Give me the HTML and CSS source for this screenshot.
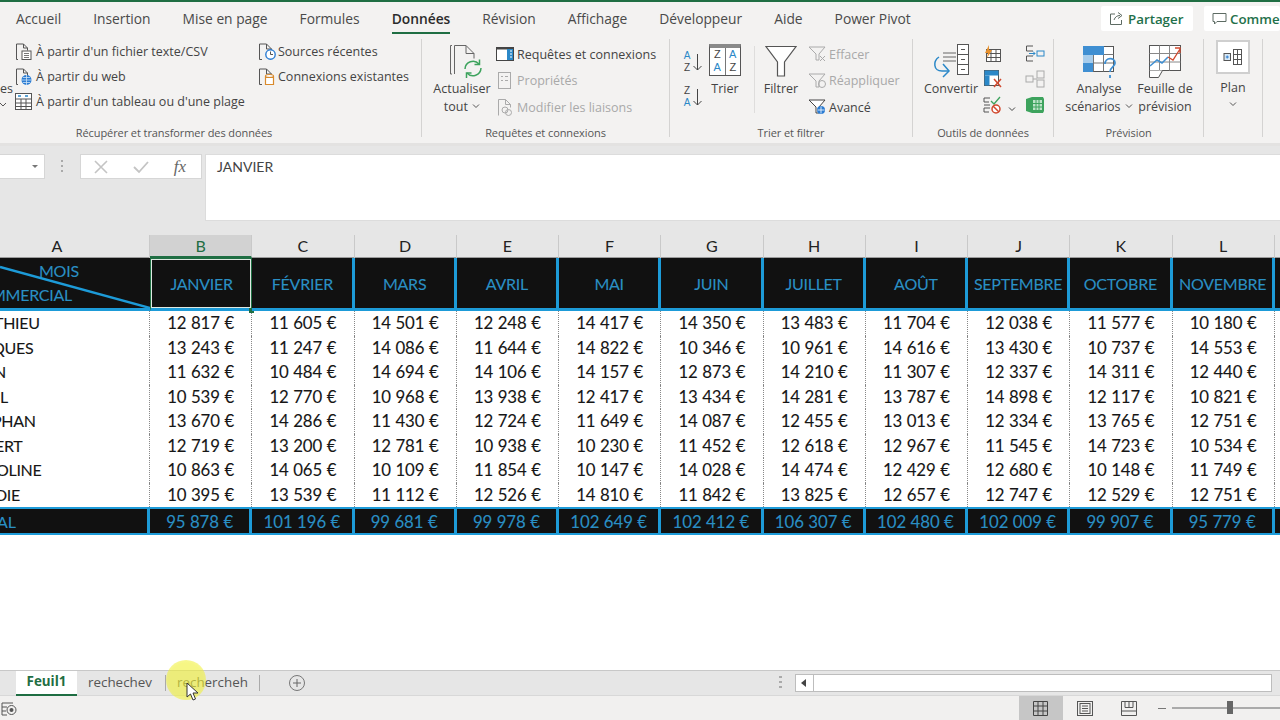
FILE: index.html
```html
<!DOCTYPE html>
<html lang="fr">
<head>
<meta charset="utf-8">
<title>Excel</title>
<link rel="stylesheet" href="styles.css">
</head>
<body>
<div class="app">
  <div class="topline"></div>
  <div class="tabs">
    <span class="tab">Accueil</span><span class="tab">Insertion</span><span class="tab">Mise en page</span><span class="tab">Formules</span><span class="tab active">Données</span><span class="tab">Révision</span><span class="tab">Affichage</span><span class="tab">Développeur</span><span class="tab">Aide</span><span class="tab">Power Pivot</span>
    <span class="spacer"></span>
    <span class="share"><svg width="16" height="15" viewBox="0 0 16 15"><path d="M6 3H1.500v10.500h11V9M5 9c1-3 3-4.500 6-4.500M9 1.500l4 3-4 3" fill="none" stroke="#5d6b63"/></svg>Partager</span>
    <span class="share comment"><svg width="15" height="14" viewBox="0 0 15 14"><path d="M1 1.500h13v8H5L2.500 12V9.500H1z" fill="none" stroke="#5d6b63"/></svg>Commentaires</span>
  </div>

  <div class="ribbon">
    <section class="g g1">
      <div class="body">
        <div class="stub"><span>es</span><svg width="8" height="5" viewBox="0 0 8 5"><path d="M0 0l3 3 3-3" fill="none" stroke="#555"/></svg></div>
        <div class="col c1">
          <div class="row"><svg class="i1" width="18" height="17" viewBox="0 0 18 17"><path d="M3 16.500H1.500V1h7l4 4v2.500" fill="none" stroke="#555"/><path d="M8.500 1v4h4" fill="none" stroke="#555"/><rect x="7" y="8" width="9" height="8.500" fill="#fff" stroke="#555"/><path d="M9 10.500h5M9 12.500h5M9 14.500h5" stroke="#777"/></svg>À partir d'un fichier texte/CSV</div>
          <div class="row"><svg class="i1" width="18" height="17" viewBox="0 0 18 17"><path d="M3 16.500H1.500V1h7l4 4v2.500" fill="none" stroke="#555"/><path d="M8.500 1v4h4" fill="none" stroke="#555"/><circle cx="11.500" cy="12" r="5" fill="#2b7cd3"/><path d="M6.500 12h10M11.500 7v10M8 9.500h7M8 14.500h7" stroke="#cfe3f6" stroke-width=".8"/></svg>À partir du web</div>
          <div class="row"><svg class="i1" width="18" height="17" viewBox="0 0 18 17"><rect x=".5" y=".5" width="16" height="16" fill="#fff" stroke="#555"/><path d="M.5 6h16M.5 10h16M.5 13.500h16M6 6v11M11 6v11" stroke="#555"/><path d="M3 3h3M10 3h3" stroke="#2b88c8" stroke-width="1.500"/></svg>À partir d'un tableau ou d'une plage</div>
        </div>
        <div class="col">
          <div class="row"><svg class="i2" width="18" height="17" viewBox="0 0 18 17"><path d="M3 16.500H.5V1h7l5 5v1" fill="none" stroke="#555"/><path d="M7.500 1v5h5" fill="none" stroke="#555"/><circle cx="11.500" cy="11.500" r="4.700" fill="#fff" stroke="#2b7cd3" stroke-width="1.400"/><path d="M11.500 8.500v3h2.500" fill="none" stroke="#555"/></svg>Sources récentes</div>
          <div class="row"><svg class="i2" width="18" height="17" viewBox="0 0 18 17"><path d="M3 16.500H.5V1h7l5 5v1" fill="none" stroke="#555"/><path d="M7.500 1v5h5" fill="none" stroke="#555"/><path d="M6.500 8c0-2 8-2 8 0v8.500h-8zM6.500 8c0 2 8 2 8 0" fill="#fff" stroke="#d98a2b" stroke-width="1.200"/></svg>Connexions existantes</div>
        </div>
      </div>
      <div class="label l1">Récupérer et transformer des données</div>
    </section>

    <section class="g g2">
      <div class="body">
        <div class="big b-act">
          <svg width="44" height="36" viewBox="0 0 44 36"><path d="M12 1.500h-1.500V30H12M14.500 30V1.500H26l8 8v5" fill="none" stroke="#666"/><path d="M26 1.500v8h8" fill="none" stroke="#666"/><path d="M25 25a8 8 0 0 1 14-5M41 24a8 8 0 0 1-14 5" fill="none" stroke="#3da35d" stroke-width="1.500"/><path d="M39.500 15.500v5h-5M26.500 34v-5h5" fill="none" stroke="#3da35d" stroke-width="1.500"/></svg>
          <span>Actualiser</span><span>tout <svg class="chev" width="8" height="5" viewBox="0 0 8 5"><path d="M1 .5l3 3 3-3" fill="none" stroke="#555"/></svg></span>
        </div>
        <div class="col c2">
          <div class="row r2"><svg class="i3" width="19" height="16" viewBox="0 0 19 16"><rect x=".5" y="1.500" width="17" height="13" fill="#fff" stroke="#444"/><path d="M.5 2.500h17" stroke="#444" stroke-width="2"/><rect x="11" y="3" width="6" height="11" fill="#2b88c8"/><path d="M14 5h2M14 8h2M14 11h2" stroke="#fff"/></svg>Requêtes et connexions</div>
          <div class="row r2 off"><svg class="i3" width="19" height="17" viewBox="0 0 19 17"><rect x="2.500" y=".5" width="12" height="16" fill="none" stroke="#aaa"/><path d="M5 4.500h2M9 4.500h3M5 8.500h2M9 8.500h3" stroke="#aaa"/></svg>Propriétés</div>
          <div class="row r2 off"><svg class="i3" width="19" height="17" viewBox="0 0 19 17"><path d="M2.500 16.500V.5h7l5 5v3" fill="none" stroke="#aaa"/><path d="M9.500.5v5h5" fill="none" stroke="#aaa"/><circle cx="9" cy="11" r="3" fill="none" stroke="#aaa"/><circle cx="12.500" cy="13.500" r="3" fill="none" stroke="#aaa"/></svg>Modifier les liaisons</div>
        </div>
      </div>
      <div class="label l2">Requêtes et connexions</div>
    </section>

    <section class="g g3">
      <div class="body">
        <div class="sortcol">
          <div class="sort"><span class="az"><b>A</b><i>Z</i></span><svg width="9" height="18" viewBox="0 0 9 18"><path d="M4.500 1v16M.5 13l4 4 4-4" fill="none" stroke="#444"/></svg></div>
          <div class="sort"><span class="az"><i>Z</i><b>A</b></span><svg width="9" height="18" viewBox="0 0 9 18"><path d="M4.500 1v16M.5 13l4 4 4-4" fill="none" stroke="#444"/></svg></div>
        </div>
        <div class="big b-tri">
          <div class="trier-ico"><span class="tr-cell"><i>Z</i><b>A</b></span><span class="tr-cell"><b>A</b><i>Z</i></span></div>
          <span>Trier</span>
        </div>
        <div class="vsep"></div>
        <div class="big b-fil">
          <svg width="36" height="36" viewBox="0 0 36 36"><path d="M3 2.500h30L21.500 18v14h-7V18z" fill="#fff" stroke="#555" stroke-width="1.200"/></svg>
          <span>Filtrer</span>
        </div>
        <div class="col c3">
          <div class="row r2 off"><svg class="i4" width="19" height="16" viewBox="0 0 19 16"><path d="M1 1h16l-6 7v6h-3V8z" fill="none" stroke="#aaa"/><path d="M12 10l5 5M17 10l-5 5" stroke="#aaa"/></svg>Effacer</div>
          <div class="row r2 off"><svg class="i4" width="19" height="16" viewBox="0 0 19 16"><path d="M1 1h16l-6 7v6h-3V8z" fill="none" stroke="#aaa"/><circle cx="14" cy="11" r="3.500" fill="none" stroke="#aaa"/></svg>Réappliquer</div>
          <div class="row r2"><svg class="i4" width="19" height="16" viewBox="0 0 19 16"><path d="M1 1h16l-6 7v6H8V8z" fill="#fff" stroke="#444"/><circle cx="13" cy="11" r="4" fill="#2b7cd3"/><path d="M9.500 11h7M13 7.500v7" stroke="#fff" stroke-width=".8"/></svg>Avancé</div>
        </div>
      </div>
      <div class="label l3">Trier et filtrer</div>
    </section>

    <section class="g g4">
      <div class="body">
        <div class="big b-con">
          <svg width="38" height="36" viewBox="0 0 38 36"><path d="M11 9h13M11 13h13M11 17h13" stroke="#666"/><rect x="25.500" y=".5" width="11" height="30" fill="#fff" stroke="#555"/><path d="M25.500 10.500h11M25.500 20.500h11M29 5.500h4M29 15.500h4M29 25.500h4" stroke="#555"/><path d="M7 13C1 17 1 27 10 27h6" fill="none" stroke="#2b88c8" stroke-width="1.500"/><path d="M11 20l6 7-6 6" fill="none" stroke="#2b88c8" stroke-width="1.500"/></svg>
          <span>Convertir</span>
        </div>
        <div class="col c4">
          <div class="tool"><svg width="20" height="18" viewBox="0 0 20 18"><rect x="3.500" y="4.500" width="14" height="12" fill="#fff" stroke="#555"/><path d="M3.500 8.500h14M3.500 12.500h14M8 4.500v12M13 4.500v12" stroke="#555"/><path d="M6 0L2 8h3l-1 5 5-8H6z" fill="#e8912d"/></svg></div>
          <div class="tool"><svg width="20" height="18" viewBox="0 0 20 18"><rect x="1.500" y=".5" width="14" height="15" fill="#fff" stroke="#555"/><rect x="1.500" y=".5" width="14" height="5" fill="#2b88c8"/><rect x="1.500" y="5.500" width="5" height="10" fill="#2b88c8"/><path d="M11 9l7 8M18 9l-7 8" stroke="#d1492e" stroke-width="1.500"/></svg></div>
          <div class="tool"><svg width="20" height="18" viewBox="0 0 20 18"><path d="M7 2H1v4h5M7 12H1v4h5M1 9h6" fill="none" stroke="#555"/><path d="M8 5l3 3 6-7" fill="none" stroke="#3da35d" stroke-width="1.300"/><circle cx="13" cy="13" r="4" fill="#fff" stroke="#d1492e" stroke-width="1.500"/><path d="M10 10l6 6" stroke="#d1492e" stroke-width="1.500"/></svg></div>
        </div>
        <div class="c4chev"><svg width="8" height="5" viewBox="0 0 8 5"><path d="M1 .5l3 3 3-3" fill="none" stroke="#444"/></svg></div>
        <div class="col c4b">
          <div class="tool"><svg width="20" height="18" viewBox="0 0 20 18"><path d="M8 1H1.500v5H8M8 11H1.500v5H8" fill="none" stroke="#555"/><path d="M4 8.500h6M8 6.500l2 2-2 2" fill="none" stroke="#2b88c8"/><rect x="12" y="6" width="7" height="5" fill="none" stroke="#2b88c8"/></svg></div>
          <div class="tool"><svg width="20" height="18" viewBox="0 0 20 18"><rect x="1" y="6" width="7" height="6" fill="none" stroke="#aaa"/><rect x="12" y="1" width="7" height="7" fill="none" stroke="#aaa"/><rect x="12" y="10" width="7" height="7" fill="none" stroke="#aaa"/><path d="M8 9h4" stroke="#aaa"/></svg></div>
          <div class="tool"><svg width="20" height="18" viewBox="0 0 20 18"><path d="M1 3l6-2h11l1 2v12l-1 2H7l-6-2z" fill="#3da35d"/><rect x="8" y="4" width="9" height="10" fill="#bde3c8"/><path d="M11 4v10M14 4v10M8 7.500h9M8 11h9" stroke="#3da35d"/></svg></div>
        </div>
      </div>
      <div class="label l4">Outils de données</div>
    </section>

    <section class="g g5">
      <div class="body">
        <div class="big b-ana">
          <svg width="36" height="36" viewBox="0 0 36 36"><rect x="2.500" y="2.500" width="30" height="25" fill="#fff" stroke="#555"/><path d="M12.500 2.500v25M22.500 2.500v25M2.500 10.500h30M2.500 19h30" stroke="#777"/><rect x="2" y="2" width="21" height="9" fill="#3f8fd2"/><rect x="2" y="11" width="10" height="8" fill="#a7cdec"/><rect x="2" y="19" width="10" height="9" fill="#3f8fd2"/><path d="M24 20c0-7 10-7 10-1 0 4-5 4-5 9M29 31v3" fill="none" stroke="#3f8fd2" stroke-width="1.800"/></svg>
          <span>Analyse</span><span>scénarios <svg class="chev" width="8" height="5" viewBox="0 0 8 5"><path d="M1 .5l3 3 3-3" fill="none" stroke="#555"/></svg></span>
        </div>
        <div class="big b-feu">
          <svg width="36" height="36" viewBox="0 0 36 36"><rect x="2.500" y="1.500" width="31" height="25" fill="#fff" stroke="#555"/><path d="M12.500 1.500v25M22.500 1.500v25M2.500 9.500h31M2.500 18h31" stroke="#888"/><path d="M2.500 26.500v7h9l4-7" fill="#fff" stroke="#555"/><path d="M3 22l7-6 5 3 6-6" fill="none" stroke="#3f8fd2" stroke-width="1.500"/><path d="M21 13l5 3 7-11M28 4h5v5" fill="none" stroke="#d1492e" stroke-width="1.300"/></svg>
          <span>Feuille de</span><span>prévision</span>
        </div>
      </div>
      <div class="label l5">Prévision</div>
    </section>

    <section class="g g6">
      <div class="planbtn"><svg width="20" height="18" viewBox="0 0 20 18"><rect x="1" y="5.500" width="6.500" height="7" fill="#d8e9f6" stroke="#555"/><path d="M4.200 7.500v3M2.800 9h3" stroke="#2b7cd3"/><rect x="10.500" y="1.500" width="8" height="15" fill="#fff" stroke="#555"/><path d="M10.500 6.500h8M10.500 11.500h8M14.500 1.500v15" stroke="#555"/></svg></div>
      <span class="plan">Plan</span>
      <svg class="chev2" width="8" height="5" viewBox="0 0 8 5"><path d="M1 .5l3 3 3-3" fill="none" stroke="#555"/></svg>
    </section>
  </div>

  <div class="formula">
    <div class="namebox"><span class="caret"></span></div>
    <div class="fdots"></div>
    <div class="fxbox">
      <svg width="16" height="14" viewBox="0 0 16 14"><path d="M2 1l12 12M14 1L2 13" stroke="#c4c4c4" stroke-width="1.600"/></svg>
      <svg width="18" height="14" viewBox="0 0 18 14"><path d="M2 7l5 5L16 2" fill="none" stroke="#c4c4c4" stroke-width="1.800"/></svg>
      <span class="fx">fx</span>
    </div>
    <div class="finput">JANVIER</div>
  </div>

  <div class="heads">
    <span class="h h-a">A</span><span class="h sel">B</span><span class="h">C</span><span class="h">D</span><span class="h">E</span><span class="h">F</span><span class="h">G</span><span class="h">H</span><span class="h">I</span><span class="h">J</span><span class="h">K</span><span class="h">L</span><span class="h last"></span>
  </div>

  <div class="sheet">
    <div class="hc first">
      <span class="mois">MOIS</span><span class="comm">MMERCIAL</span>
      <svg class="diag" width="150" height="50" viewBox="0 0 150 50"><path d="M0 9L150 50" stroke="#1d9bd8" stroke-width="2.400"/></svg>
    </div>
    <div class="hc active-cell">JANVIER<i class="handle"></i></div><div class="hc">FÉVRIER</div><div class="hc">MARS</div><div class="hc">AVRIL</div><div class="hc">MAI</div><div class="hc">JUIN</div><div class="hc">JUILLET</div><div class="hc">AOÛT</div><div class="hc">SEPTEMBRE</div><div class="hc">OCTOBRE</div><div class="hc">NOVEMBRE</div><div class="hc endc"></div>

    <div class="n"><span class="nm n1">THIEU</span></div><div class="c">12 817 €</div><div class="c">11 605 €</div><div class="c">14 501 €</div><div class="c">12 248 €</div><div class="c">14 417 €</div><div class="c">14 350 €</div><div class="c">13 483 €</div><div class="c">11 704 €</div><div class="c">12 038 €</div><div class="c">11 577 €</div><div class="c">10 180 €</div><div class="e"></div>
    <div class="n"><span class="nm n2">QUES</span></div><div class="c">13 243 €</div><div class="c">11 247 €</div><div class="c">14 086 €</div><div class="c">11 644 €</div><div class="c">14 822 €</div><div class="c">10 346 €</div><div class="c">10 961 €</div><div class="c">14 616 €</div><div class="c">13 430 €</div><div class="c">10 737 €</div><div class="c">14 553 €</div><div class="e"></div>
    <div class="n"><span class="nm n3">N</span></div><div class="c">11 632 €</div><div class="c">10 484 €</div><div class="c">14 694 €</div><div class="c">14 106 €</div><div class="c">14 157 €</div><div class="c">12 873 €</div><div class="c">14 210 €</div><div class="c">11 307 €</div><div class="c">12 337 €</div><div class="c">14 311 €</div><div class="c">12 440 €</div><div class="e"></div>
    <div class="n"><span class="nm n4">L</span></div><div class="c">10 539 €</div><div class="c">12 770 €</div><div class="c">10 968 €</div><div class="c">13 938 €</div><div class="c">12 417 €</div><div class="c">13 434 €</div><div class="c">14 281 €</div><div class="c">13 787 €</div><div class="c">14 898 €</div><div class="c">12 117 €</div><div class="c">10 821 €</div><div class="e"></div>
    <div class="n"><span class="nm n5">PHAN</span></div><div class="c">13 670 €</div><div class="c">14 286 €</div><div class="c">11 430 €</div><div class="c">12 724 €</div><div class="c">11 649 €</div><div class="c">14 087 €</div><div class="c">12 455 €</div><div class="c">13 013 €</div><div class="c">12 334 €</div><div class="c">13 765 €</div><div class="c">12 751 €</div><div class="e"></div>
    <div class="n"><span class="nm n6">ERT</span></div><div class="c">12 719 €</div><div class="c">13 200 €</div><div class="c">12 781 €</div><div class="c">10 938 €</div><div class="c">10 230 €</div><div class="c">11 452 €</div><div class="c">12 618 €</div><div class="c">12 967 €</div><div class="c">11 545 €</div><div class="c">14 723 €</div><div class="c">10 534 €</div><div class="e"></div>
    <div class="n"><span class="nm n7">OLINE</span></div><div class="c">10 863 €</div><div class="c">14 065 €</div><div class="c">10 109 €</div><div class="c">11 854 €</div><div class="c">10 147 €</div><div class="c">14 028 €</div><div class="c">14 474 €</div><div class="c">12 429 €</div><div class="c">12 680 €</div><div class="c">10 148 €</div><div class="c">11 749 €</div><div class="e"></div>
    <div class="n"><span class="nm n8">DIE</span></div><div class="c">10 395 €</div><div class="c">13 539 €</div><div class="c">11 112 €</div><div class="c">12 526 €</div><div class="c">14 810 €</div><div class="c">11 842 €</div><div class="c">13 825 €</div><div class="c">12 657 €</div><div class="c">12 747 €</div><div class="c">12 529 €</div><div class="c">12 751 €</div><div class="e"></div>

    <div class="t tn"><span class="nm n9">AL</span></div><div class="t">95 878 €</div><div class="t">101 196 €</div><div class="t">99 681 €</div><div class="t">99 978 €</div><div class="t">102 649 €</div><div class="t">102 412 €</div><div class="t">106 307 €</div><div class="t">102 480 €</div><div class="t">102 009 €</div><div class="t">99 907 €</div><div class="t">95 779 €</div><div class="t endc"></div>
  </div>

  <div class="blank"></div>

  <div class="sheetbar">
    <span class="st cur">Feuil1</span><span class="st">rechechev</span><span class="st">rechercheh</span>
    <svg class="plus" width="18" height="18" viewBox="0 0 18 18"><circle cx="9" cy="9" r="7.500" fill="none" stroke="#777"/><path d="M9 5v8M5 9h8" stroke="#666"/></svg>
    <span class="spacer"></span>
    <span class="sdots"></span>
    <div class="hscroll"><span class="larrow"></span></div>
  </div>

  <div class="status">
    <svg class="macro" width="17" height="15" viewBox="0 0 17 15"><path d="M1 2h11M1 6h5M1 10h4M1 14h5M1 2v12" fill="none" stroke="#555"/><circle cx="10.500" cy="9" r="4.500" fill="#f1f0ef" stroke="#555"/><circle cx="10.500" cy="9" r="2" fill="#555"/></svg>
    <span class="spacer"></span>
    <div class="vw on"><svg width="16" height="15" viewBox="0 0 16 15"><path d="M.5.500h14v14H.5zM.5 5h14M.5 10h14M5 .5v14M10 .5v14" fill="none" stroke="#444"/></svg></div>
    <div class="vw"><svg width="16" height="15" viewBox="0 0 16 15"><rect x=".5" y=".5" width="15" height="14" fill="none" stroke="#555"/><rect x="3" y="2.500" width="10" height="10" fill="none" stroke="#555"/><path d="M5 5h6M5 7.500h6M5 10h6" stroke="#555"/></svg></div>
    <div class="vw"><svg width="16" height="15" viewBox="0 0 16 15"><path d="M.5.500h15v14H.5zM.5 10h15M4 .5v6h4v-6M8 6.500h4v-6" fill="none" stroke="#555"/></svg></div>
    <span class="minus"></span>
    <div class="track"><i class="thumb"></i></div>
  </div>

  <div class="pointer">
    <svg class="arrow" width="14" height="20" viewBox="0 0 14 20"><path d="M1 1v14l3.500-3 2.500 6 2.500-1-2.500-6H12z" fill="#fff" stroke="#333"/></svg>
  </div>
</div>
</body>
</html>
```
FILE: styles.css
```css
* { box-sizing: border-box; }
html, body { margin: 0; padding: 0; }
body { width: 1280px; height: 720px; overflow: hidden; background: #fff; font-family: "Open Sans", "Noto Sans", sans-serif; color: #444; }
.app { position: relative; width: 1280px; height: 720px; overflow: hidden; display: flex; flex-direction: column; }
.spacer { flex: 1; }

.topline { height: 2px; background: #1f6e43; flex: none; }
.tabs { height: 32px; flex: none; background: #f3f2f1; display: flex; align-items: center; padding-left: 16px; gap: 32px; font-size: 13.800px; color: #4a4a4a; white-space: nowrap; overflow: hidden; }
.tab { position: relative; line-height: 34px; height: 32px; }
.tab.active { color: #2b2b2b; font-weight: 600; }
.tab.active::after { content: ""; position: absolute; left: 0; right: 0; bottom: -1px; height: 3px; background: #1f6e43; }
.share { flex: none; width: 92px; overflow: hidden; background: #fff; height: 25px; margin-top: 1px; margin-left: -21px; padding: 0 0 0 8px; display: flex; align-items: center; gap: 3px; font-weight: 600; font-size: 13.300px; color: #23704a; border-radius: 2px; }
.share.comment { width: 76px; }
.share.comment svg { flex: none; }

.ribbon { height: 112px; flex: none; background: #f3f2f1; display: flex; padding-top: 5px; border-bottom: 3px solid #e3e2e1; font-size: 12.500px; }
.g { height: 98px; border-right: 1px solid #d4d3d2; flex: none; display: flex; flex-direction: column; }
.g1 { width: 422px; } .g2 { width: 248px; } .g3 { width: 243px; } .g4 { width: 141px; } .g5 { width: 150px; } .g6 { width: 59px; align-items: center; }
.body { height: 90px; display: flex; flex: none; }
.label { height: 8px; line-height: 8px; font-size: 11px; letter-spacing: -0.08px; color: #555; white-space: nowrap; text-align: center; }
.l1 { padding-right: 73px; }
.col { display: flex; flex-direction: column; white-space: nowrap; }
.row { height: 25px; display: flex; align-items: center; }
.r2 { height: 26.500px; }
.off { color: #a9a9a9; }
.stub { width: 15px; flex: none; padding-top: 41px; display: flex; flex-direction: column; line-height: 18px; overflow: hidden; }
.stub span { display: block; }
.stub svg { margin-top: 5px; }
.c1 { width: 244px; flex: none; }
.i1 { flex: none; margin-right: 3px; }
.i2 { flex: none; margin-right: 1px; }
.i3, .i4 { flex: none; margin-right: 2px; }
.c2 { padding-top: 2px; }

.big { flex: none; display: flex; flex-direction: column; align-items: center; padding-top: 5px; line-height: 18px; white-space: nowrap; }
.big > svg { display: block; flex: none; }
.chev { vertical-align: 2px; margin-left: 1px; }
.b-act { margin-left: 7px; width: 66px; margin-right: 1px; }
.sortcol { margin-left: 12px; width: 20px; flex: none; display: flex; flex-direction: column; padding-top: 12px; gap: 14px; }
.sort { display: flex; align-items: center; gap: 1px; height: 21px; }
.az { display: flex; flex-direction: column; font-family: "Liberation Sans", sans-serif; font-size: 10px; line-height: 11.500px; width: 10px; text-align: center; }
.az b, .tr-cell b { font-weight: 400; color: #2b88c8; font-style: normal; }
.az i, .tr-cell i { font-style: normal; color: #444; }
.b-tri { margin-left: 3px; width: 40px; }
.trier-ico { width: 32px; height: 32px; margin-bottom: 4px; border: 1px solid #555; border-top: 4px solid #8a8a8a; background: #fff; display: flex; }
.tr-cell { flex: 1; display: flex; flex-direction: column; align-items: center; font-family: "Liberation Sans", sans-serif; font-size: 11px; line-height: 13px; }
.tr-cell + .tr-cell { border-left: 1px solid #777; }
.vsep { width: 1px; height: 67px; margin-top: 7px; margin-left: 9px; background: #dedddc; flex: none; }
.b-fil { margin-left: 1px; width: 50px; }
.c3 { padding-top: 2px; margin-left: 2px; }
.b-con { margin-left: 7px; width: 62px; }
.c4 { width: 25px; margin-left: 1px; flex: none; padding-top: 2px; }
.tool { height: 25.500px; display: flex; align-items: center; }
.c4chev { width: 17px; flex: none; padding-top: 60px; }
.c4b { padding-top: 2px; flex: none; }
.b-ana { margin-left: 10px; width: 70px; }
.b-feu { width: 62px; }
.planbtn { width: 34px; height: 34px; margin-top: 1px; background: #fff; border: 2px solid #cfcfcf; display: flex; align-items: center; justify-content: center; }
.plan { line-height: 18px; margin-top: 5px; }
.chev2 { margin-top: 5px; }

.formula { height: 89px; flex: none; background: #e6e6e6; display: flex; align-items: flex-start; padding-top: 8px; }
.namebox { width: 45px; height: 25px; background: #fff; border: 1px solid #d6d6d6; border-left: 0; flex: none; display: flex; align-items: center; justify-content: flex-end; padding-right: 6px; }
.caret { width: 0; height: 0; border: 3px solid transparent; border-top: 3px solid #777; margin-top: 3px; }
.fdots { width: 2px; height: 12px; margin: 6px 17px 0 16px; flex: none; background: repeating-linear-gradient(#aaa 0 2px, transparent 2px 5px); }
.fxbox { width: 122px; height: 25px; flex: none; background: #fff; border: 1px solid #d6d6d6; display: flex; align-items: center; padding: 0 15px 0 12px; justify-content: space-between; }
.fx { font-family: "Liberation Serif", serif; font-style: italic; font-size: 17px; color: #666; }
.finput { flex: 1; margin-left: 3px; height: 67px; background: #fff; border: 1px solid #dcdcdc; border-right: 0; padding-left: 11px; font-family: "Lato", sans-serif; font-size: 14px; line-height: 23px; color: #444; }

.heads { height: 23px; flex: none; background: #e6e6e6; display: grid; grid-template-columns: 150px repeat(11, 102.250px) 1fr; font-family: "Lato", sans-serif; font-size: 16px; color: #222; border-bottom: 1px solid #9b9b9b; }
.h { text-align: center; line-height: 21px; border-right: 1px solid #c9c9c9; }
.h-a { padding-right: 35px; }
.h.sel { background: #d2d2d2; color: #1f6e43; border-bottom: 2px solid #1f6e43; }
.h.last { border-right: 0; }

.sheet { flex: none; display: grid; grid-template-columns: 150px repeat(11, 102.250px) 1fr; grid-template-rows: 53px repeat(8, 24.500px) 28px; font-family: "Lato", sans-serif; font-size: 16.800px; color: #161616; -webkit-text-stroke: 0.1px; }
.hc { background: #111; color: #2a8fc4; border-right: 3px solid #1d9bd8; border-bottom: 3px solid #1d9bd8; display: flex; align-items: center; justify-content: center; white-space: nowrap; position: relative; font-size: 16px; letter-spacing: -0.25px; padding-left: 1px; }
.hc.first { display: block; overflow: hidden; padding: 0; border-right: 0; }
.mois { position: absolute; left: 39px; top: 3px; line-height: 20px; }
.comm { position: absolute; left: -9px; top: 27px; line-height: 20px; }
.diag { position: absolute; left: 0; top: 0; }
.hc.active-cell { border: 1px solid #1f6e43; border-bottom: 3px solid #1d9bd8; box-shadow: inset 0 0 0 1px #dfe9e2; }
.handle { position: absolute; right: -3px; bottom: -5px; width: 5px; height: 5px; background: #1f6e43; }
.hc.endc { border-right: 0; }
.n { line-height: 24px; border-right: 1px dotted #888; overflow: hidden; font-size: 16px; letter-spacing: -0.3px; white-space: nowrap; }
.nm { display: block; }
.n1 { margin-left: -6px; } .n2 { margin-left: -8px; } .n3 { margin-left: -6px; } .n4 { margin-left: 0; } .n5 { margin-left: -8px; } .n6 { margin-left: -5px; } .n7 { margin-left: -4px; } .n8 { margin-left: -5px; } .n9 { margin-left: -3px; }
.c { text-align: center; line-height: 24px; border-right: 1px dotted #888; white-space: nowrap; }
.e { background: #fff; }
.t { background: #111; color: #2a8fc4; text-align: center; line-height: 26px; border-top: 2px solid #1d9bd8; border-bottom: 2px solid #1d9bd8; border-right: 3px solid #1d9bd8; white-space: nowrap; overflow: hidden; }
.t.tn { text-align: left; font-size: 16px; }
.t.endc { border-right: 0; }

.blank { flex: 1; background: #fff; }
.sheetbar { height: 26px; flex: none; background: #e6e6e6; border-top: 1px solid #c8c8c8; border-bottom: 1px solid #d8d8d8; display: flex; align-items: center; font-size: 13.400px; padding-left: 16px; color: #555; }
.st { height: 24px; line-height: 22px; border-right: 1px solid #aaa; }
.st:nth-child(2) { padding: 0 13px 0 11px; height: 16px; line-height: 14px; }
.st:nth-child(3) { padding: 0 11px 0 11px; height: 16px; line-height: 14px; }
.st.cur { width: 61px; padding: 0; text-align: center; background: #fff; color: #1f6e43; font-weight: 700; border: 0; border-bottom: 2px solid #1f6e43; height: 25px; line-height: 21px; }
.plus { margin-left: 28px; flex: none; }
.sdots { width: 3px; height: 14px; flex: none; background: repeating-linear-gradient(#aaa 0 2px, transparent 2px 5px); margin-right: 13px; }
.hscroll { width: 477px; height: 18px; flex: none; margin-right: 8px; background: #fff; border: 1px solid #bdbdbd; display: flex; align-items: center; }
.larrow { width: 18px; height: 16px; border-right: 1px solid #bdbdbd; position: relative; flex: none; }
.larrow::before { content: ""; position: absolute; left: 5px; top: 4px; border: 4px solid transparent; border-left: 0; border-right: 5px solid #444; }

.status { height: 24px; flex: none; background: #f1f0ef; display: flex; align-items: center; }
.macro { margin-left: 1px; flex: none; }
.vw { width: 44px; height: 24px; flex: none; display: flex; align-items: center; justify-content: center; }
.vw.on { background: #c6c6c6; }
.minus { width: 8px; height: 1px; background: #777; margin-left: 7px; flex: none; }
.track { width: 108px; height: 2px; background: #aaa; margin-left: 6px; position: relative; flex: none; }
.thumb { position: absolute; left: 55px; top: -6px; width: 6px; height: 13px; background: #666; }

.pointer { position: absolute; left: 166px; top: 660px; width: 40px; height: 40px; border-radius: 50%; background: radial-gradient(circle, rgba(240, 240, 50, 0.6) 60%, rgba(240, 240, 60, 0.35) 100%); }
.arrow { position: absolute; left: 20px; top: 22px; }
```
